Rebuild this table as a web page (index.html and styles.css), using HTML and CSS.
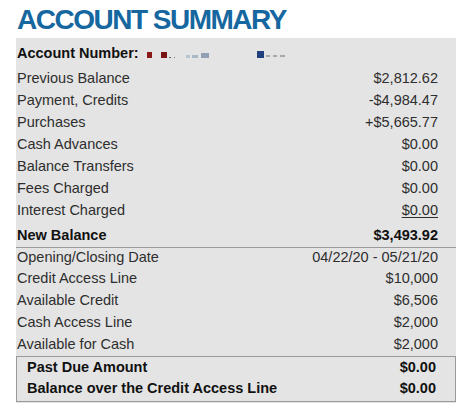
FILE: index.html
```html
<!DOCTYPE html>
<html>
<head>
<meta charset="utf-8">
<link rel="stylesheet" href="styles.css">
</head>
<body>
<h1 class="title">ACCOUNT SUMMARY</h1>
<div class="panel">
  <div class="acct">
    <span class="acct-label">Account Number:</span>
    <span class="redact">
      <i class="r r1"></i><i class="r r2"></i><i class="r d1"></i><i class="r d2"></i>
      <i class="r l1"></i><i class="r l2"></i><i class="r l3"></i>
      <i class="r b1"></i><i class="r g1"></i><i class="r g2"></i><i class="r g3"></i>
    </span>
  </div>
  <div class="row"><span>Previous Balance</span><span>$2,812.62</span></div>
  <div class="row"><span>Payment, Credits</span><span>-$4,984.47</span></div>
  <div class="row"><span>Purchases</span><span>+$5,665.77</span></div>
  <div class="row"><span>Cash Advances</span><span>$0.00</span></div>
  <div class="row"><span>Balance Transfers</span><span>$0.00</span></div>
  <div class="row"><span>Fees Charged</span><span>$0.00</span></div>
  <div class="row"><span>Interest Charged</span><span class="ul">$0.00</span></div>
  <div class="row bold newbal"><span>New Balance</span><span>$3,493.92</span></div>
  <div class="row dates"><span>Opening/Closing Date</span><span>04/22/20 - 05/21/20</span></div>
  <div class="row"><span>Credit Access Line</span><span>$10,000</span></div>
  <div class="row"><span>Available Credit</span><span>$6,506</span></div>
  <div class="row"><span>Cash Access Line</span><span>$2,000</span></div>
  <div class="row"><span>Available for Cash</span><span>$2,000</span></div>
  <div class="box">
    <div class="row bold"><span>Past Due Amount</span><span>$0.00</span></div>
    <div class="row bold"><span>Balance over the Credit Access Line</span><span>$0.00</span></div>
  </div>
</div>
</body>
</html>
```

FILE: styles.css
```css
html, body {
  margin: 0;
  padding: 0;
  background: #ffffff;
}
body {
  font-family: "Liberation Sans", Arial, Helvetica, sans-serif;
  font-size: 14.5px;
  color: #2e2e2e;
}
.title {
  margin: 0 0 1px 0;
  padding: 3px 0 0 17px;
  font-size: 28px;
  line-height: 34px;
  font-weight: bold;
  letter-spacing: -1.5px;
  color: #16679f;
}
.panel {
  margin-left: 16px;
  width: 440px;
  background: #e4e4e4;
  padding-bottom: 1px;
}
.acct {
  display: flex;
  align-items: center;
  padding: 4px 0 3px 1px;
  line-height: 22px;
  font-weight: bold;
  color: #111;
}
.redact {
  display: flex;
  align-items: flex-end;
  height: 8px;
  margin-top: 2px;
}
.r {
  display: block;
}
.r1 { width: 5px; height: 6px; margin-left: 8px; background: #8a1a1a; }
.r2 { width: 6px; height: 6px; margin-left: 9px; background: #7a1414; }
.d1 { width: 2px; height: 1px; margin-left: 2px; background: #666; }
.d2 { width: 1px; height: 1px; margin-left: 3px; background: #777; }
.l1 { width: 4px; height: 3px; margin-left: 11px; background: #b5c4d1; }
.l2 { width: 6px; height: 3px; margin-left: 2px; background: #a8b8c6; }
.l3 { width: 8px; height: 5px; margin-left: 3px; background: #8fa1b2; }
.b1 { width: 7px; height: 7px; margin-left: 48px; background: #1f3f7e; }
.g1 { width: 4px; height: 2px; margin-left: 2px; margin-bottom: 1px; background: #a9a9a9; }
.g2 { width: 4px; height: 2px; margin-left: 3px; margin-bottom: 1px; background: #a9a9a9; }
.g3 { width: 5px; height: 2px; margin-left: 3px; margin-bottom: 1px; background: #a9a9a9; }
.row {
  display: flex;
  justify-content: space-between;
  line-height: 22px;
  padding: 0 18px 0 1px;
}
.bold {
  font-weight: bold;
  color: #111;
}
.ul {
  text-decoration: underline;
  text-underline-offset: 2px;
}
.newbal {
  padding-top: 3px;
  padding-bottom: 1px;
  border-bottom: 1px solid #9a9a9a;
}
.dates {
  line-height: 19px;
}
.box {
  margin-top: 1px;
  border: 1px solid #9a9a9a;
  padding-bottom: 2px;
}
.box .row {
  line-height: 21px;
  padding: 0 19px 0 10px;
}
```
